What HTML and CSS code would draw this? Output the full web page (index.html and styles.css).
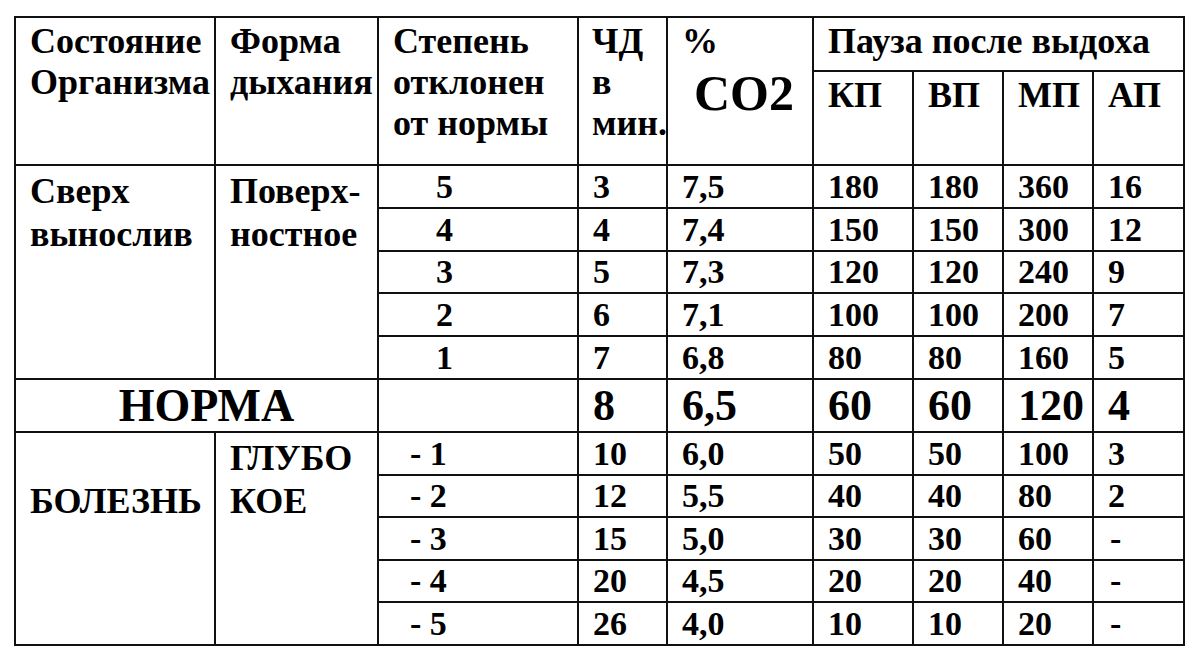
FILE: index.html
```html
<!DOCTYPE html>
<html lang="ru">
<head>
<meta charset="utf-8">
<title>Таблица</title>
<link rel="stylesheet" href="styles.css">
</head>
<body>
<table class="grid">
  <colgroup>
    <col class="c-state"><col class="c-form"><col class="c-deg"><col class="c-chd"><col class="c-co2">
    <col class="c-p"><col class="c-p2"><col class="c-p2"><col class="c-p3">
  </colgroup>
  <tr class="h1">
    <th rowspan="2">Состояние<br>Организма</th>
    <th rowspan="2">Форма<br>дыхания</th>
    <th rowspan="2">Степень<br>отклонен<br>от нормы</th>
    <th rowspan="2" class="chd">ЧД<br>в<br>мин.</th>
    <th rowspan="2" class="co2">%<span class="big">CO2</span></th>
    <th colspan="4">Пауза после выдоха</th>
  </tr>
  <tr class="h2">
    <th>КП</th><th>ВП</th><th>МП</th><th>АП</th>
  </tr>

  <tr class="r">
    <td rowspan="5" class="group">Сверх<br>вынослив</td>
    <td rowspan="5" class="group">Поверх-<br>ностное</td>
    <td class="deg">5</td><td>3</td><td>7,5</td><td>180</td><td>180</td><td>360</td><td>16</td>
  </tr>
  <tr class="r"><td class="deg">4</td><td>4</td><td>7,4</td><td>150</td><td>150</td><td>300</td><td>12</td></tr>
  <tr class="r r42"><td class="deg">3</td><td>5</td><td>7,3</td><td>120</td><td>120</td><td>240</td><td>9</td></tr>
  <tr class="r"><td class="deg">2</td><td>6</td><td>7,1</td><td>100</td><td>100</td><td>200</td><td>7</td></tr>
  <tr class="r"><td class="deg">1</td><td>7</td><td>6,8</td><td>80</td><td>80</td><td>160</td><td>5</td></tr>

  <tr class="norm">
    <td colspan="2" class="norm-label">НОРМА</td>
    <td></td><td>8</td><td>6,5</td><td>60</td><td>60</td><td>120</td><td>4</td>
  </tr>

  <tr class="r">
    <td rowspan="5" class="group sick">БОЛЕЗНЬ</td>
    <td rowspan="5" class="group">ГЛУБО<br>КОЕ</td>
    <td class="deg neg">- 1</td><td>10</td><td>6,0</td><td>50</td><td>50</td><td>100</td><td>3</td>
  </tr>
  <tr class="r r42"><td class="deg neg">- 2</td><td>12</td><td>5,5</td><td>40</td><td>40</td><td>80</td><td>2</td></tr>
  <tr class="r"><td class="deg neg">- 3</td><td>15</td><td>5,0</td><td>30</td><td>30</td><td>60</td><td class="dash">-</td></tr>
  <tr class="r r42"><td class="deg neg">- 4</td><td>20</td><td>4,5</td><td>20</td><td>20</td><td>40</td><td class="dash">-</td></tr>
  <tr class="r"><td class="deg neg">- 5</td><td>26</td><td>4,0</td><td>10</td><td>10</td><td>20</td><td class="dash">-</td></tr>
</table>
</body>
</html>
```

FILE: styles.css
```css
html, body {
  margin: 0;
  padding: 0;
  background: #fff;
}

body {
  padding: 16px 0 0 14px;
  color: #000;
}

.grid {
  border-collapse: collapse;
  table-layout: fixed;
  width: 1171px;
  font-family: "Liberation Serif", "Times New Roman", serif;
  font-weight: 700;
}

.c-state { width: 200px; }
.c-form { width: 163px; }
.c-deg { width: 200px; }
.c-chd { width: 89px; }
.c-co2 { width: 146px; }
.c-p { width: 100px; }
.c-p2 { width: 90px; }
.c-p3 { width: 91px; }

.grid th,
.grid td {
  border: 2px solid #111;
  padding: 0 0 0 14px;
  text-align: left;
  white-space: nowrap;
  font-family: "Liberation Serif", "Times New Roman", serif;
  font-weight: 700;
  color: #000;
}

.grid th {
  font-size: 36px;
  line-height: 41px;
  vertical-align: top;
  padding-top: 3px;
}

.h1 { height: 54px; }
.h2 { height: 94px; }

.h2 th { padding-top: 3px; }

.grid th.chd { padding-left: 13px; }

.co2 .big {
  display: block;
  font-size: 50px;
  line-height: 54px;
  margin-top: 4px;
  padding-left: 12px;
}

.grid td {
  font-size: 34px;
  line-height: 38px;
  vertical-align: middle;
}

.r { height: 43px; }
.r42 { height: 42px; }
.norm { height: 53px; }

.grid td.group {
  vertical-align: top;
  font-size: 36px;
  padding-top: 4px;
  line-height: 43px;
}

.grid td.sick {
  padding-top: 47px;
}

.grid td.deg { padding-left: 57px; }
.grid td.deg.neg { padding-left: 31px; }

.norm td {
  font-size: 44px;
  line-height: 48px;
}

.grid td.norm-label {
  text-align: center;
  font-size: 46px;
  padding-left: 20px;
}

.grid td.dash { padding-left: 16px; }
```
